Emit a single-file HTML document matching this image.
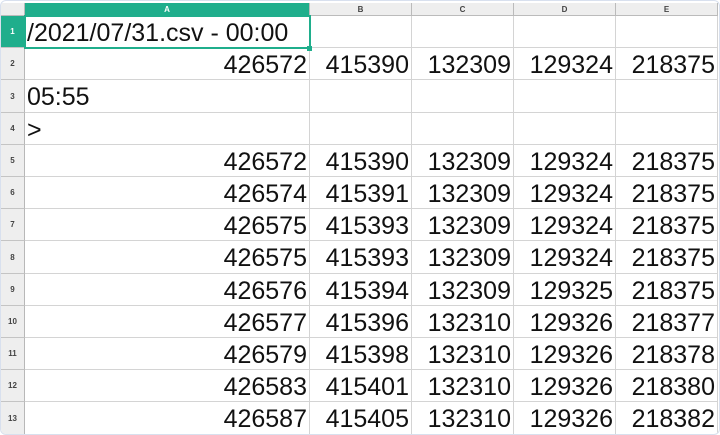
<!DOCTYPE html><html><head><style>
body{margin:0;width:720px;height:435px;overflow:hidden;background:#fff;font-family:"Liberation Sans",sans-serif;}
.wrap{position:absolute;left:0;top:0;width:718px;height:433px;border:1px solid #d8e0ee;border-radius:6px;overflow:hidden;background:#fff}
.h{position:absolute;top:2px;height:13px;background:#eeeeee;border-right:1px solid #bbb;border-bottom:1px solid #bbb;font-size:8px;color:#444;text-align:center;line-height:13px;box-sizing:border-box;font-weight:bold}
.r{position:absolute;left:0;width:24px;background:#eeeeee;border-right:1px solid #b8b8b8;border-bottom:1px solid #c4c4c4;font-size:8px;color:#444;text-align:center;box-sizing:border-box;font-weight:bold}
.c{position:absolute;border-right:1px solid #d4d4d4;border-bottom:1px solid #d4d4d4;box-sizing:border-box;font-size:25px;color:#111;text-align:right;padding-right:2px;white-space:nowrap;overflow:visible}
</style></head><body><div class="wrap" id="w"></div>
<script>
var w=document.getElementById('w');
var cols=[[24,309],[309,411],[411,513],[513,615],[615,717]];
var names="ABCDE";
var h='<div class="h" style="left:0;width:24px"></div>';
cols.forEach(function(c,i){h+='<div class="h" style="left:'+c[0]+'px;width:'+(c[1]-c[0])+'px;'+(i==0?'background:#1fae8c;color:#fff;font-weight:bold':'')+'">'+names[i]+'</div>';});
var data=[null,["426572","415390","132309","129324","218375"],null,null,
["426572","415390","132309","129324","218375"],["426574","415391","132309","129324","218375"],
["426575","415393","132309","129324","218375"],["426575","415393","132309","129324","218375"],
["426576","415394","132309","129325","218375"],["426577","415396","132310","129326","218377"],
["426579","415398","132310","129326","218378"],["426583","415401","132310","129326","218380"],
["426587","415405","132310","129326","218382"]];
var left={0:"/2021/07/31.csv - 00:00",2:"05:55",3:">"};
for(var r=0;r<13;r++){var t=Math.round(15+32.2*r),b=Math.round(15+32.2*(r+1)),ht=b-t;
h+='<div class="r" style="top:'+t+'px;height:'+ht+'px;line-height:'+ht+'px;'+(r==0?'background:#1fae8c;color:#fff':'')+'">'+(r+1)+'</div>';
cols.forEach(function(c,i){var txt='',st='';
if(data[r])txt=data[r][i];
if(i==0&&left[r]!==undefined){txt=left[r];st='text-align:left;padding-left:2px;';}
h+='<div class="c" style="left:'+c[0]+'px;top:'+t+'px;width:'+(c[1]-c[0])+'px;height:'+ht+'px;line-height:'+(ht+2)+'px;'+st+'">'+txt+'</div>';});}
h+='<div style="position:absolute;left:23px;top:14px;width:287px;height:34px;border:2px solid #1fae8c;box-sizing:border-box"></div>';
h+='<div style="position:absolute;left:306px;top:45px;width:5px;height:5px;background:#1fae8c"></div>';
w.innerHTML=h;
</script></body></html>
